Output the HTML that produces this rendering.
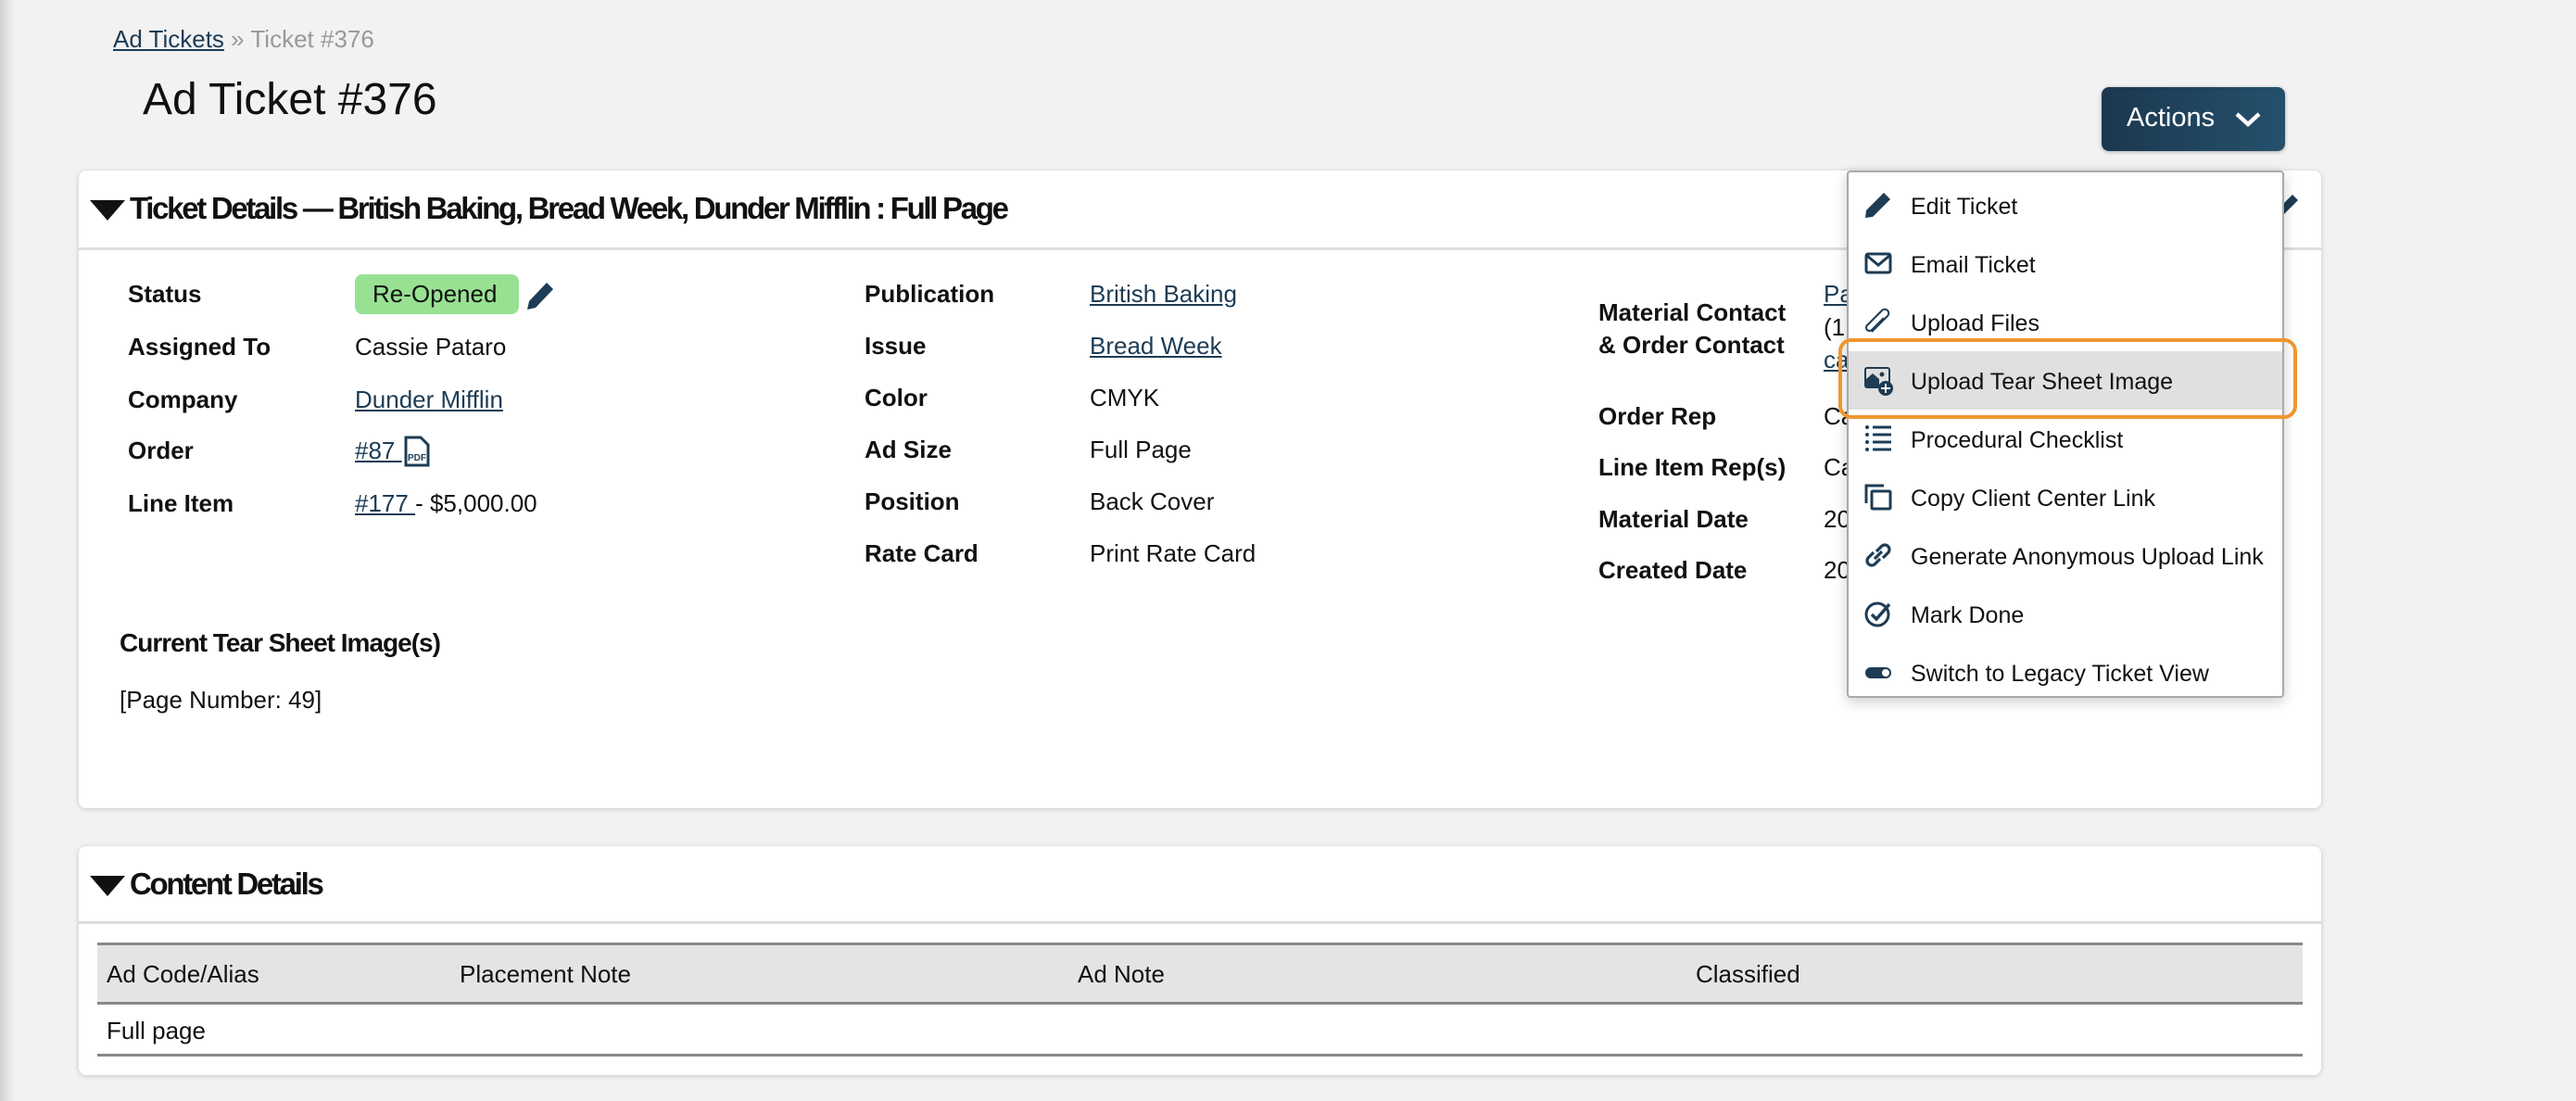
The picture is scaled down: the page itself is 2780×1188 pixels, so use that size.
<!DOCTYPE html>
<html><head><meta charset="utf-8"><style>
*{margin:0;padding:0;box-sizing:border-box}
body{width:2780px;height:1188px;background:#f2f2f2;font-family:"Liberation Sans",sans-serif;color:#111;position:relative;overflow:hidden}
.a{position:absolute;white-space:nowrap;line-height:1}
.t{font-size:26px}
.b{font-weight:bold}
a,.lk{color:#1d3c55;text-decoration:underline}
.card{position:absolute;background:#fff;border-radius:8px;box-shadow:0 1px 6px rgba(0,0,0,.18)}
.hl{position:absolute;height:3px;background:#ddd}
.h{font-size:33px;font-weight:bold;letter-spacing:-2.3px}
.menu{position:absolute;left:1993px;top:184px;width:472px;height:569px;background:#fff;border:2px solid #aaa;border-radius:4px;box-shadow:0 4px 14px rgba(0,0,0,.2)}
.mi{position:absolute;left:0;width:468px;height:63px}
.mi span{position:absolute;left:67px;top:19px;font-size:25px;color:#111}
.mi svg{position:absolute;left:17px;top:16px}
</style></head><body>
<div style="position:absolute;left:0;top:0;width:16px;height:1188px;background:linear-gradient(90deg,#cfcfcf,#e6e6e6 60%,#f2f2f2)"></div>

<div class="a" style="left:122px;top:29px;font-size:26px"><a>Ad Tickets</a> <span style="color:#999">» Ticket #376</span></div>
<div class="a" style="left:154px;top:84px;font-size:48px">Ad Ticket #376</div>

<div style="position:absolute;left:2268px;top:94px;width:198px;height:69px;border-radius:8px;background:linear-gradient(90deg,#1b3850,#25506c);box-shadow:0 1px 4px rgba(0,0,0,.3)"></div>
<div class="a" style="left:2295px;top:113px;font-size:29px;color:#fff">Actions</div>
<svg style="position:absolute;left:2411px;top:120px" width="30" height="18" viewBox="0 0 30 18"><path d="M3 3 L15 14 L27 3" stroke="#fff" stroke-width="4.5" fill="none"/></svg>

<div class="card" style="left:85px;top:184px;width:2420px;height:688px"></div>
<div class="hl" style="left:85px;top:267px;width:2420px"></div>
<svg style="position:absolute;left:97px;top:216px" width="38" height="22"><path d="M0 0 L38 0 L19 22Z" fill="#111"/></svg>
<div class="a h" style="left:140px;top:208px">Ticket Details — British Baking, Bread Week, Dunder Mifflin : Full Page</div>
<svg style="position:absolute;left:2450px;top:206px" width="34" height="34" viewBox="0 0 34 34"><path d="M4 30 L6 22 L24 4 L30 10 L12 28Z" fill="#1d3c55"/></svg>

<div class="a t b" style="left:138px;top:304px">Status</div>
<div style="position:absolute;left:383px;top:296px;width:177px;height:43px;background:#98e193;border-radius:8px"></div>
<div class="a t" style="left:402px;top:304px">Re-Opened</div>
<svg style="position:absolute;left:566px;top:300px" width="36" height="36" viewBox="0 0 36 36"><path d="M3 34 L5 25 L24 5 L31 12 L12 32Z" fill="#1d3c55"/></svg>
<div class="a t b" style="left:138px;top:361px">Assigned To</div>
<div class="a t" style="left:383px;top:361px">Cassie Pataro</div>
<div class="a t b" style="left:138px;top:418px">Company</div>
<div class="a t" style="left:383px;top:418px"><a>Dunder Mifflin</a></div>
<div class="a t b" style="left:138px;top:473px">Order</div>
<div class="a t" style="left:383px;top:473px"><a>#87&nbsp;</a></div>
<svg style="position:absolute;left:436px;top:470px" width="28" height="34" viewBox="0 0 28 34"><path d="M2 2 H18 L26 10 V32 H2Z" fill="#fff" stroke="#1d3c55" stroke-width="3"/><text x="4" y="27" font-size="10" font-family="Liberation Sans" fill="#1d3c55" font-weight="bold">PDF</text></svg>
<div class="a t b" style="left:138px;top:530px">Line Item</div>
<div class="a t" style="left:383px;top:530px"><a>#177 </a>- $5,000.00</div>

<div class="a t b" style="left:933px;top:304px">Publication</div>
<div class="a t" style="left:1176px;top:304px"><a>British Baking</a></div>
<div class="a t b" style="left:933px;top:360px">Issue</div>
<div class="a t" style="left:1176px;top:360px"><a>Bread Week</a></div>
<div class="a t b" style="left:933px;top:416px">Color</div>
<div class="a t" style="left:1176px;top:416px">CMYK</div>
<div class="a t b" style="left:933px;top:472px">Ad Size</div>
<div class="a t" style="left:1176px;top:472px">Full Page</div>
<div class="a t b" style="left:933px;top:528px">Position</div>
<div class="a t" style="left:1176px;top:528px">Back Cover</div>
<div class="a t b" style="left:933px;top:584px">Rate Card</div>
<div class="a t" style="left:1176px;top:584px">Print Rate Card</div>

<div class="a t b" style="left:1725px;top:324px">Material Contact</div>
<div class="a t b" style="left:1725px;top:359px">&amp; Order Contact</div>
<div class="a t" style="left:1968px;top:304px"><a>Pa</a></div>
<div class="a t" style="left:1968px;top:340px">(1</div>
<div class="a t" style="left:1968px;top:375px"><a>ca</a></div>
<div class="a t b" style="left:1725px;top:436px">Order Rep</div>
<div class="a t" style="left:1968px;top:436px">Ca</div>
<div class="a t b" style="left:1725px;top:491px">Line Item Rep(s)</div>
<div class="a t" style="left:1968px;top:491px">Ca</div>
<div class="a t b" style="left:1725px;top:547px">Material Date</div>
<div class="a t" style="left:1968px;top:547px">20</div>
<div class="a t b" style="left:1725px;top:602px">Created Date</div>
<div class="a t" style="left:1968px;top:602px">20</div>

<div class="a b" style="left:129px;top:680px;font-size:28px;letter-spacing:-1px">Current Tear Sheet Image(s)</div>
<div class="a t" style="left:129px;top:742px">[Page Number: 49]</div>

<div class="card" style="left:85px;top:913px;width:2420px;height:247px"></div>
<div class="hl" style="left:85px;top:994px;width:2420px"></div>
<svg style="position:absolute;left:97px;top:945px" width="38" height="22"><path d="M0 0 L38 0 L19 22Z" fill="#111"/></svg>
<div class="a h" style="left:140px;top:937px">Content Details</div>
<div style="position:absolute;left:105px;top:1017px;width:2380px;height:67px;background:#e4e4e4;border-top:3px solid #888;border-bottom:3px solid #888"></div>
<div class="a t" style="left:115px;top:1038px">Ad Code/Alias</div>
<div class="a t" style="left:496px;top:1038px">Placement Note</div>
<div class="a t" style="left:1163px;top:1038px">Ad Note</div>
<div class="a t" style="left:1830px;top:1038px">Classified</div>
<div class="a t" style="left:115px;top:1099px">Full page</div>
<div style="position:absolute;left:105px;top:1137px;width:2380px;height:3px;background:#888"></div>

<div class="menu">
 <div class="mi" style="top:4px"><svg width="30" height="30" viewBox="0 0 30 30"><path d="M1 29 L2 21 L21 2 L28 9 L9 28Z" fill="#1d3c55"/></svg><span>Edit Ticket</span></div>
 <div class="mi" style="top:67px"><svg width="30" height="30" viewBox="0 0 30 30"><rect x="2" y="5" width="26" height="20" rx="2" fill="none" stroke="#1d3c55" stroke-width="3"/><path d="M3 7 L15 17 L27 7" fill="none" stroke="#1d3c55" stroke-width="3"/></svg><span>Email Ticket</span></div>
 <div class="mi" style="top:130px"><svg width="30" height="30" viewBox="0 0 30 30"><path d="M8 26 L25 9 A4 4 0 0 0 19 3 L3 19 A3 3 0 0 0 8 24 L21 11" fill="none" stroke="#1d3c55" stroke-width="2"/></svg><span>Upload Files</span></div>
 <div class="mi" style="top:193px;background:#e0e0e0"><svg width="32" height="32" viewBox="0 0 32 32"><rect x="1" y="2" width="26" height="21" rx="2" fill="none" stroke="#1d3c55" stroke-width="2"/><path d="M2 22 L2 14 L9 8 L16 14 L16 22Z" fill="#1d3c55"/><circle cx="19" cy="9" r="2.5" fill="#1d3c55"/><circle cx="23" cy="24" r="8" fill="#1d3c55"/><path d="M23 19 V29 M18 24 H28" stroke="#fff" stroke-width="2"/></svg><span>Upload Tear Sheet Image</span></div>
 <div class="mi" style="top:256px"><svg width="30" height="30" viewBox="0 0 30 30"><g fill="#1d3c55"><circle cx="3" cy="3" r="2"/><circle cx="3" cy="11" r="2"/><circle cx="3" cy="19" r="2"/><circle cx="3" cy="27" r="2"/><rect x="9" y="1.5" width="20" height="3"/><rect x="9" y="9.5" width="20" height="3"/><rect x="9" y="17.5" width="20" height="3"/><rect x="9" y="25.5" width="20" height="3"/></g></svg><span>Procedural Checklist</span></div>
 <div class="mi" style="top:319px"><svg width="30" height="30" viewBox="0 0 30 30"><path d="M2 22 V3 H21" fill="none" stroke="#1d3c55" stroke-width="3"/><rect x="8" y="9" width="20" height="19" rx="1" fill="none" stroke="#1d3c55" stroke-width="3"/></svg><span>Copy Client Center Link</span></div>
 <div class="mi" style="top:382px"><svg width="30" height="30" viewBox="0 0 30 30"><path d="M13 11 L19 5 A5 5 0 0 1 26 12 L20 18 M17 19 L11 25 A5 5 0 0 1 4 18 L10 12 M11 19 L19 11" fill="none" stroke="#1d3c55" stroke-width="3.2"/></svg><span>Generate Anonymous Upload Link</span></div>
 <div class="mi" style="top:445px"><svg width="30" height="30" viewBox="0 0 30 30"><circle cx="14" cy="16" r="12" fill="none" stroke="#1d3c55" stroke-width="3"/><path d="M8 16 L13 21 L27 5" fill="none" stroke="#1d3c55" stroke-width="3.5"/></svg><span>Mark Done</span></div>
 <div class="mi" style="top:508px"><svg width="30" height="30" viewBox="0 0 30 30"><rect x="1" y="10" width="28" height="12" rx="6" fill="#1d3c55"/><circle cx="23" cy="16" r="4" fill="#fff"/></svg><span>Switch to Legacy Ticket View</span></div>
</div>
<div style="position:absolute;left:1984px;top:365px;width:495px;height:87px;border:4px solid #f0962e;border-radius:14px"></div>
</body></html>
